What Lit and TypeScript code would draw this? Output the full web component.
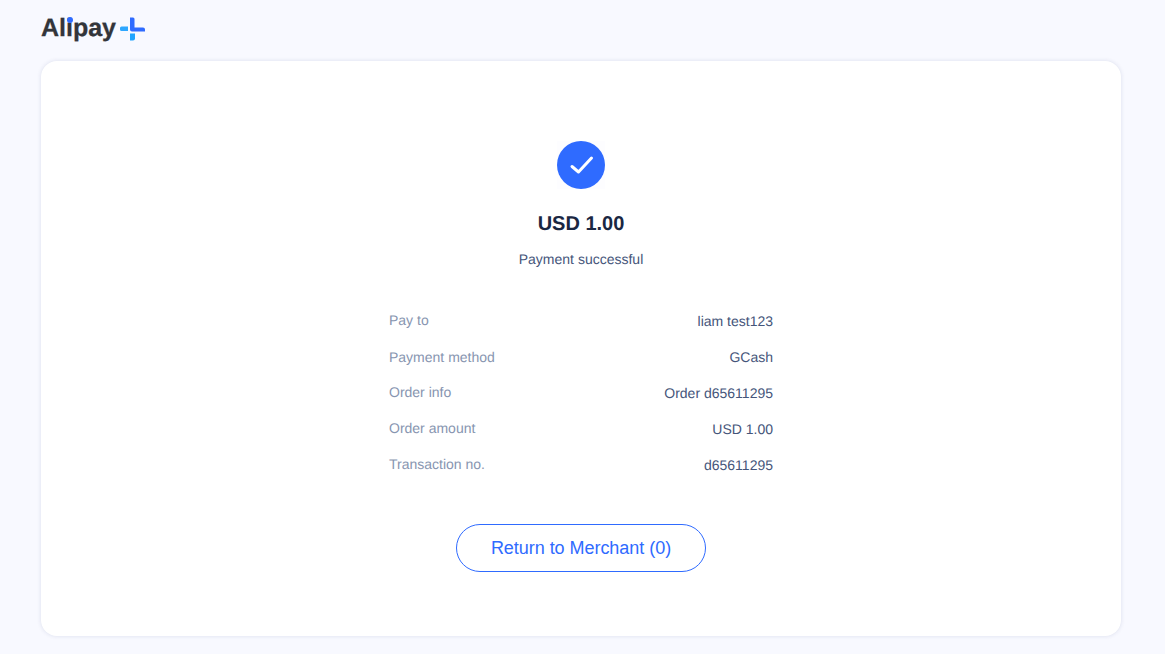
import { LitElement, html, css } from 'lit';
import { customElement } from 'lit/decorators.js';

const rows = [
  ['Pay to', 'liam test123'],
  ['Payment method', 'GCash'],
  ['Order info', 'Order d65611295'],
  ['Order amount', 'USD 1.00'],
  ['Transaction no.', 'd65611295'],
];

@customElement('app-root')
export class AppRoot extends LitElement {
  static styles = css`
    :host {
      display: block;
      height: 654px;
      overflow: hidden;
      background: #f8f9ff;
      font-family: 'Liberation Sans', Arial, sans-serif;
      text-rendering: geometricPrecision;
      padding: 0 44px 0 41px;
      box-sizing: border-box;
    }
    .logo {
      display: flex;
      align-items: flex-start;
      height: 61px;
      padding-top: 13px;
      box-sizing: border-box;
      gap: 4px;
    }
    .logo-text {
      position: relative;
      font-size: 25px;
      line-height: 30px;
      font-weight: bold;
      letter-spacing: 0;
      color: #33353a;
      -webkit-text-stroke: 0.3px #33353a;
    }
    .logo-dot {
      position: absolute;
      left: 25.5px;
      top: 4px;
      width: 6px;
      height: 6px;
      border-radius: 50%;
      background: #2f6bff;
    }
    .logo svg {
      display: block;
      margin-top: 4px;
    }
    .card {
      height: 575px;
      box-sizing: border-box;
      background: #fff;
      border-radius: 16px;
      box-shadow: 0 0 4px rgba(40, 60, 120, 0.14);
      padding-top: 80px;
      display: flex;
      flex-direction: column;
      align-items: center;
    }
    .check {
      display: block;
      background: #fdfdff;
    }
    .amount {
      margin-top: 23px;
      font-size: 20px;
      line-height: 24px;
      font-weight: bold;
      color: #1a2742;
    }
    .status {
      margin-top: 13px;
      font-size: 14px;
      line-height: 20px;
      color: #45557a;
    }
    .rows {
      margin-top: 42px;
      width: 384px;
      display: flex;
      flex-direction: column;
      gap: 16px;
    }
    .row {
      display: flex;
      justify-content: space-between;
      height: 20px;
      font-size: 14px;
      line-height: 20px;
    }
    .label {
      color: #8795b0;
      margin-top: -1px;
    }
    .row:nth-child(2) .label {
      margin-top: 0;
    }
    .value {
      color: #45557a;
    }
    .return {
      margin-top: 49px;
      width: 250px;
      height: 48px;
      box-sizing: border-box;
      border: 1px solid #2f6bff;
      border-radius: 24px;
      background: #fff;
      color: #2f6bff;
      font: 18px/46px 'Liberation Sans', Arial, sans-serif;
      letter-spacing: -0.04px;
      padding: 0;
    }
  `;

  render() {
    return html`
      <div class="logo">
        <span class="logo-text">Alipay<span class="logo-dot"></span></span>
        <svg width="25" height="24" viewBox="0 0 25 24">
          <path d="M1.500 9.500H8V14H1.500A1.500 1.500 0 0 1 0 12.500v-1.500A1.500 1.500 0 0 1 1.500 9.500z" fill="#2ea7ff" />
          <path d="M10 16.500h5v5a2 2 0 0 1-2 2h-3z" fill="#1fa4ff" />
          <path d="M10 .5h3a1.500 1.500 0 0 1 1.500 1.500v8.500H23a2 2 0 0 1 2 2v2H12a2 2 0 0 1-2-2z" fill="#2f6bff" />
        </svg>
      </div>
      <div class="card">
        <svg class="check" width="48" height="48" viewBox="0 0 48 48">
          <circle cx="24" cy="24" r="24" fill="#2f6bff" />
          <path d="M15 25.500l6.500 5.500 13-14" fill="none" stroke="#fff" stroke-width="3" stroke-linecap="round" stroke-linejoin="round" />
        </svg>
        <div class="amount">USD 1.00</div>
        <div class="status">Payment successful</div>
        <div class="rows">
          ${rows.map(([label, value]) => html`
            <div class="row">
              <span class="label">${label}</span>
              <span class="value">${value}</span>
            </div>
          `)}
        </div>
        <button class="return">Return to Merchant (0)</button>
      </div>
    `;
  }
}
